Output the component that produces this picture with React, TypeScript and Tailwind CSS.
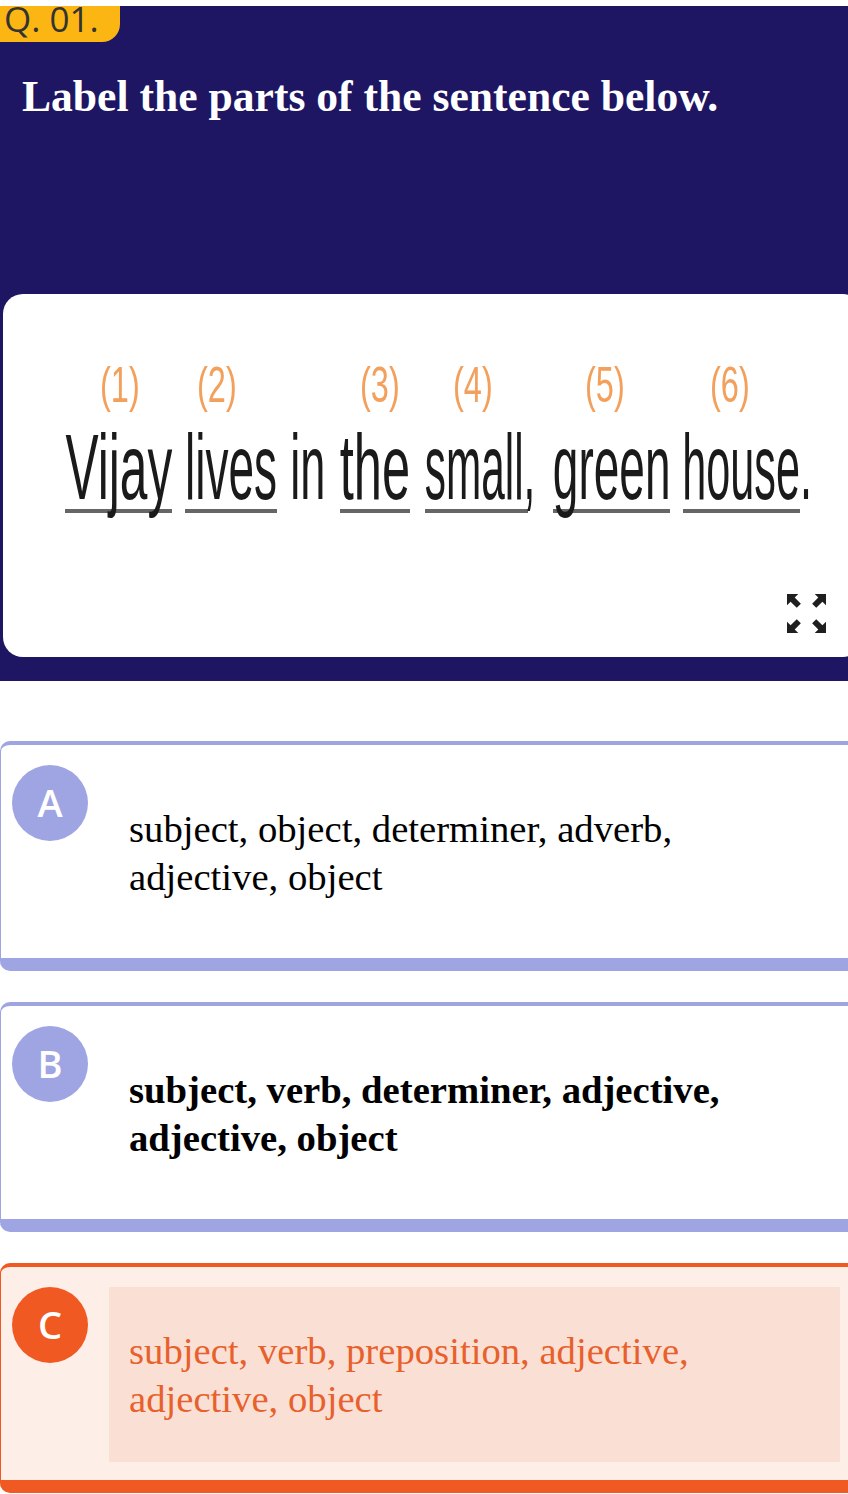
import React from "react";

const WORDS = [
  { text: "Vijay", label: "(1)", lp: "pl-[35px]", w: "w-[107px]", ml: "ml-[62px]", line: "w-[107px]", scale: "scale-x-[0.54]" },
  { text: "lives", label: "(2)", lp: "pl-[12px]", w: "w-[92px]", ml: "ml-[13px]", line: "w-[92px]", scale: "scale-x-[0.5]" },
  { text: "in", label: "", lp: "", w: "w-[35px]", ml: "ml-[13px]", line: "", scale: "scale-x-[0.49]" },
  { text: "the", label: "(3)", lp: "pl-[20px]", w: "w-[70px]", ml: "ml-[15px]", line: "w-[70px]", scale: "scale-x-[0.55]" },
  { text: "small,", label: "(4)", lp: "pl-[28px]", w: "w-[110px]", ml: "ml-[15px]", line: "w-[103px]", scale: "scale-x-[0.46]" },
  { text: "green", label: "(5)", lp: "pl-[32px]", w: "w-[117px]", ml: "ml-[18px]", line: "w-[117px]", scale: "scale-x-[0.5]" },
  { text: "house.", label: "(6)", lp: "pl-[27px]", w: "w-[129px]", ml: "ml-[13px]", line: "w-[117px]", scale: "scale-x-[0.47]" },
];

const OPTIONS = [
  {
    letter: "A",
    text: ["subject, object, determiner, adverb,", "adjective, object"],
    card: "border-[#9fa5e2] bg-white",
    circle: "bg-[#9fa5e2]",
    box: "",
    textCls: "text-black font-normal",
  },
  {
    letter: "B",
    text: ["subject, verb, determiner, adjective,", "adjective, object"],
    card: "border-[#9fa5e2] bg-white",
    circle: "bg-[#9fa5e2]",
    box: "",
    textCls: "text-black font-bold",
  },
  {
    letter: "C",
    text: ["subject, verb, preposition, adjective,", "adjective, object"],
    card: "border-[#f05a22] bg-[#fdeee8]",
    circle: "bg-[#f05a22]",
    box: "bg-[#fae0d4]",
    textCls: "text-[#e8602c] font-normal",
  },
];

function ExpandIcon() {
  return (
    <svg width="39" height="39" viewBox="0 0 38 38" fill="#1f1f1f">
      <path d="M0 0 L11 0 L7.5 3.5 L13.5 9.5 L9.5 13.5 L3.5 7.5 L0 11 Z" />
      <path d="M38 0 L27 0 L30.5 3.5 L24.5 9.5 L28.5 13.5 L34.5 7.5 L38 11 Z" />
      <path d="M0 38 L11 38 L7.5 34.5 L13.5 28.5 L9.5 24.5 L3.5 30.5 L0 27 Z" />
      <path d="M38 38 L27 38 L30.5 34.5 L24.5 28.5 L28.5 24.5 L34.5 30.5 L38 27 Z" />
    </svg>
  );
}

export default function App() {
  return (
    <div className="w-[848px] min-h-[1494px] overflow-hidden bg-white">
      <div className="h-[6px] bg-white" />
      <div className="relative overflow-hidden bg-[#1e1663] pb-[24px]">
        <div className="absolute left-0 top-0 h-[36px] w-[120px] overflow-hidden rounded-br-[18px] bg-[#fcb614] pl-[4px]">
          <div className="mt-[-5px] text-[35px] leading-none text-[#333]" style={{ fontFamily: '"Open Sans", sans-serif' }}>
            Q. 01.
          </div>
        </div>
        <h1
          className="pl-[22px] pt-[69px] text-[43.6px] font-bold leading-none text-white"
          style={{ fontFamily: '"Liberation Serif", serif' }}
        >
          Label the parts of the sentence below.
        </h1>
        <div className="ml-[3px] mt-[175px] flex h-[363px] w-[860px] flex-col rounded-[20px] bg-white">
          <div className="flex pt-[66px] blur-[0.7px]" style={{ fontFamily: '"Liberation Sans", sans-serif' }}>
            {WORDS.map((w) => (
              <div key={w.text} className={`flex flex-col ${w.w} ${w.ml}`}>
                <div className={`flex h-[50px] w-full text-[50px] leading-[50px] text-[#f3a05c] ${w.lp}`}>
                  <span className="origin-left scale-x-[0.65] whitespace-nowrap">{w.label}</span>
                </div>
                <div className="mt-[11px] flex h-[88px] w-full justify-center text-[92px] leading-[92px] text-[#1a1a1a]">
                  <span className={`whitespace-nowrap ${w.scale}`}>{w.text}</span>
                </div>
                <div className="flex h-[4px] w-full">
                  {w.line && <div className={`h-[4px] bg-[#666] ${w.line}`} />}
                </div>
              </div>
            ))}
          </div>
          <div className="mt-auto flex justify-end pb-[24px] pr-[37px]">
            <ExpandIcon />
          </div>
        </div>
      </div>

      <div className="flex flex-col gap-[31px] pt-[60px]">
        {OPTIONS.map((o) => (
          <div
            key={o.letter}
            className={`flex items-start rounded-l-[10px] border-b-[13px] border-l-[1px] border-t-[4px] pb-[18px] pl-[11px] pt-[20px] ${o.card}`}
          >
            <div
              className={`flex h-[76px] w-[76px] shrink-0 items-center justify-center rounded-full text-[38px] font-semibold text-white ${o.circle}`}
              style={{ fontFamily: '"Open Sans", sans-serif' }}
            >
              {o.letter}
            </div>
            <div className={`ml-[21px] mr-[8px] flex-1 pb-[39px] pl-[20px] pt-[40px] ${o.box}`}>
              <p
                className={`text-[38.7px] leading-[48px] ${o.textCls}`}
                style={{ fontFamily: '"Liberation Serif", serif' }}
              >
                {o.text[0]}
                <br />
                {o.text[1]}
              </p>
            </div>
          </div>
        ))}
      </div>
    </div>
  );
}
